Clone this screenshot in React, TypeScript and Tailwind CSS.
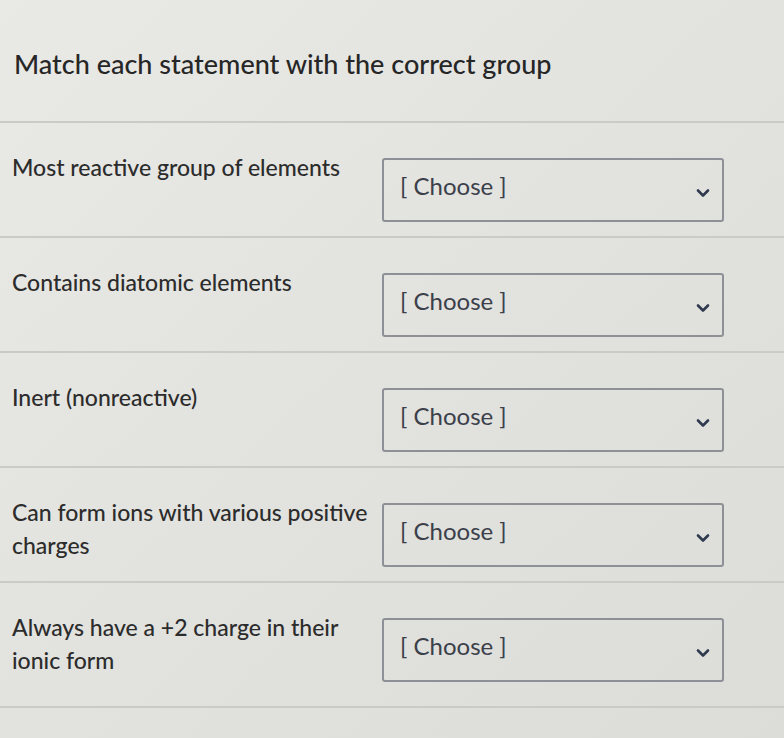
import React from "react";

const rows: string[][] = [
  ["Most reactive group of elements"],
  ["Contains diatomic elements"],
  ["Inert (nonreactive)"],
  ["Can form ions with various positive", "charges"],
  ["Always have a +2 charge in their", "ionic form"],
];

function Chevron() {
  return (
    <svg width="14" height="10" viewBox="0 0 14 10" className="text-[#2f3a4e]">
      <path d="M2 2.5 L7 7.5 L12 2.5" fill="none" stroke="currentColor" strokeWidth="2.6" strokeLinecap="round" strokeLinejoin="round" />
    </svg>
  );
}

export default function App() {
  return (
    <div
      className="w-[784px] h-[738px] overflow-hidden bg-gradient-to-br from-[#e9e9e6] via-[#e2e2df] to-[#dcdcd9] text-[#2a2a2a]"
      style={{ fontFamily: "Lato, 'Open Sans', sans-serif" }}
    >
      <div className="pt-[44px] pl-[14px] pb-[37px] text-[27px] font-medium leading-[40px] text-[#262626]">
        Match each statement with the correct group
      </div>
      {rows.map((r, i) => (
        <div key={i} className={`border-t-2 border-[#cacac7] flex pl-[12px] pr-[60px] ${i === 4 ? "h-[125px]" : "h-[115px]"}`}>
          <div className="w-[370px] shrink-0 pt-[28px] text-[23px] leading-[33px] font-medium text-[#2c2c2c]">
            {r.map((l, j) => (
              <div key={j}>{l}</div>
            ))}
          </div>
          <div className="flex-1 pt-[35px]">
            <div className="h-[64px] border-2 border-[#8d9096] rounded-[3px] flex items-center justify-between pl-[16px] pr-[12px]">
              <span className="text-[24px] text-[#3b404a] -mt-[8px]">[ Choose ]</span>
              <span className="mt-[6px]"><Chevron /></span>
            </div>
          </div>
        </div>
      ))}
      <div className="border-t-2 border-[#cacac7]" />
    </div>
  );
}
